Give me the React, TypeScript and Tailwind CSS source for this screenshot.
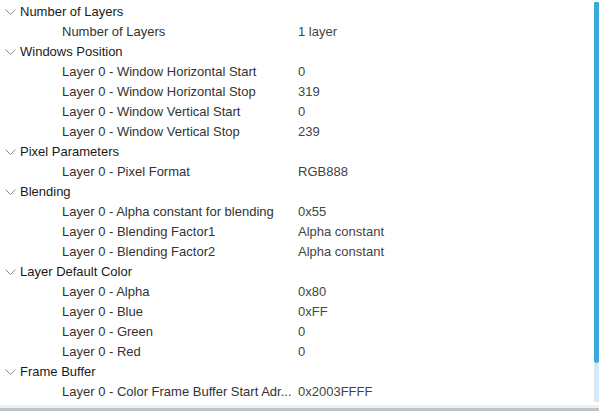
import React from "react";

type Row = { label: string; value?: string; header?: boolean };

const rows: Row[] = [
  { label: "Number of Layers", header: true },
  { label: "Number of Layers", value: "1 layer" },
  { label: "Windows Position", header: true },
  { label: "Layer 0 - Window Horizontal Start", value: "0" },
  { label: "Layer 0 - Window Horizontal Stop", value: "319" },
  { label: "Layer 0 - Window Vertical Start", value: "0" },
  { label: "Layer 0 - Window Vertical Stop", value: "239" },
  { label: "Pixel Parameters", header: true },
  { label: "Layer 0 - Pixel Format", value: "RGB888" },
  { label: "Blending", header: true },
  { label: "Layer 0 - Alpha constant for blending", value: "0x55" },
  { label: "Layer 0 - Blending Factor1", value: "Alpha constant" },
  { label: "Layer 0 - Blending Factor2", value: "Alpha constant" },
  { label: "Layer Default Color", header: true },
  { label: "Layer 0 - Alpha", value: "0x80" },
  { label: "Layer 0 - Blue", value: "0xFF" },
  { label: "Layer 0 - Green", value: "0" },
  { label: "Layer 0 - Red", value: "0" },
  { label: "Frame Buffer", header: true },
  { label: "Layer 0 - Color Frame Buffer Start Adr...", value: "0x2003FFFF" },
];

const Chevron = () => (
  <svg width="11" height="7" viewBox="0 0 11 7" className="shrink-0">
    <path d="M0.5 0.5 L5.5 5.5 L10.5 0.5" fill="none" stroke="#8a8a8a" strokeWidth="1" />
  </svg>
);

export default function App() {
  return (
    <div
      className="w-[599px] h-[415px] bg-white overflow-hidden text-[13px]"
      style={{ fontFamily: '"Liberation Sans", Arial, sans-serif' }}
    >
      <div className="flex h-[405px]">
        <div className="flex-1 min-w-0 pt-[1px]">
          {rows.map((r, i) =>
            r.header ? (
              <div key={i} className="h-[20px] flex items-center pl-[5px] pt-[2px] text-[#1a1a1a]">
                <Chevron />
                <span className="ml-[4px]">{r.label}</span>
              </div>
            ) : (
              <div key={i} className="h-[20px] flex items-center pt-[2px] text-[#333]">
                <span className="pl-[62px] w-[298px] shrink-0 whitespace-nowrap">{r.label}</span>
                <span className="text-[#444]">{r.value}</span>
              </div>
            )
          )}
        </div>
        <div className="w-[5px] pt-[2px] flex flex-col h-[402px]">
          <div className="h-[361px] bg-[#3ba9de] rounded-t-[1px] rounded-b-[3px]" />
          <div className="flex-1 bg-[#d9e8f5]" />
        </div>
      </div>
      <div className="h-[3px] bg-[#f0f0f0]" />
      <div className="h-[3px] bg-[#bcc4ca]" />
    </div>
  );
}
